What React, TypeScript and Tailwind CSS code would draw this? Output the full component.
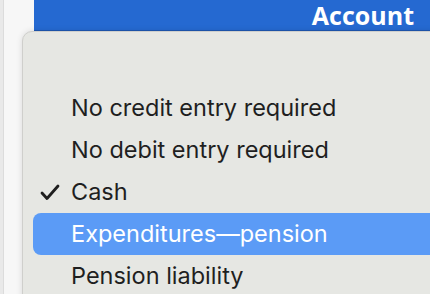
export default function App() {
  const items = [
    { label: "No credit entry required" },
    { label: "No debit entry required" },
    { label: "Cash", checked: true },
    { label: "Expenditures\u2014pension", active: true },
    { label: "Pension liability" },
  ];
  return (
    <div className="relative w-[430px] h-[294px] overflow-hidden bg-[#f7f7f7]" style={{ fontFamily: "Inter, 'Noto Sans', sans-serif" }}>
      <div className="absolute left-0 top-0 bottom-0 w-[4px] bg-[#e9e9e9] border-r border-[#dcdcdc]" />
      <div className="ml-[34px] h-[31px] bg-[#2569d1] flex items-start justify-end pr-[16px] shadow-[inset_0_-1px_0_#1e57b0]">
        <span className="text-white font-bold text-[25px] leading-[30px]" style={{ fontFamily: "'Open Sans', sans-serif" }}>Account</span>
      </div>
      <div className="absolute left-[22px] top-[31px] w-[430px] h-[290px] rounded-[10px] bg-[#e6e7e3] border border-[#cfcfcc] shadow-[0_0_6px_rgba(0,0,0,0.12)] pt-[55px] pl-[10px]">
        {items.map((it) => (
          <div
            key={it.label}
            className={`relative h-[42px] flex items-center pl-[38px] rounded-[8px] text-[23.5px] ${it.active ? "bg-[#5b9bf6] text-white" : "text-[#1f1f1f]"}`}
          >
            {it.checked && (
              <svg className="absolute left-[7px] top-[13px]" width="20" height="17" viewBox="0 0 20 17">
                <path d="M2 9 L7 14.5 L18 2" fill="none" stroke="#1f1f1f" strokeWidth="2.8" strokeLinecap="round" strokeLinejoin="round" />
              </svg>
            )}
            {it.label}
          </div>
        ))}
      </div>
    </div>
  );
}
